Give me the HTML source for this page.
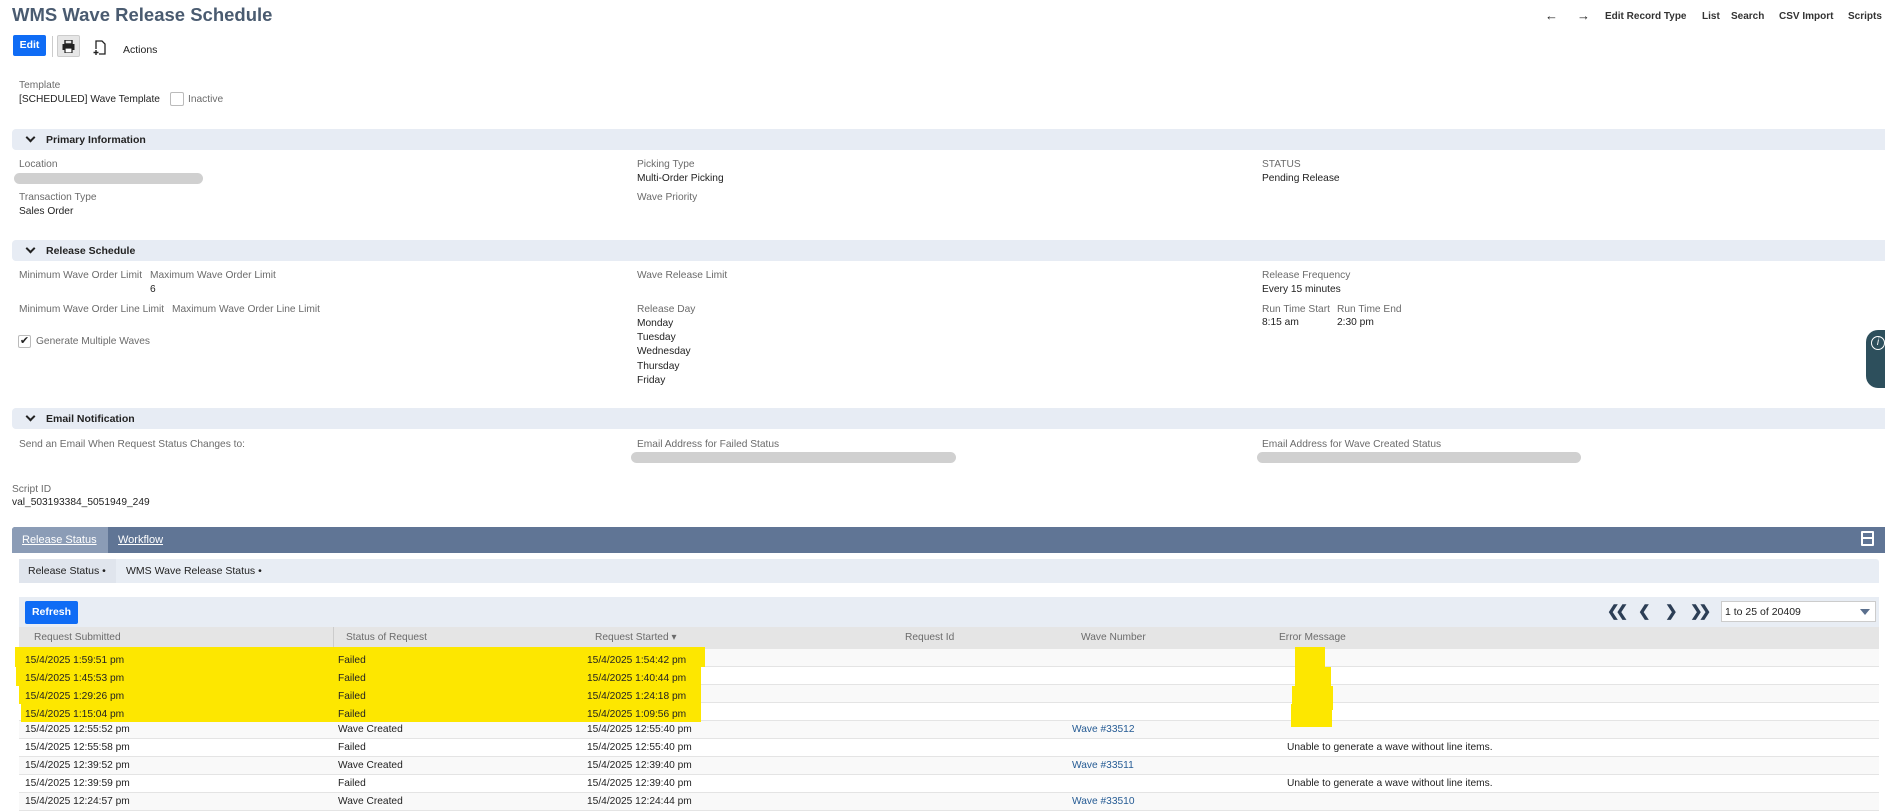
<!DOCTYPE html>
<html><head><meta charset="utf-8"><style>
*{margin:0;padding:0;box-sizing:border-box}
body{width:1885px;height:811px;overflow:hidden;background:#fff;font-family:"Liberation Sans",sans-serif;font-size:10.2px;color:#222;position:relative}
.a{position:absolute;white-space:nowrap}
.l{color:#6b6b6b}
.bar{position:absolute;left:12px;right:0;height:21px;background:#e7ecf4;border-radius:4px 0 0 4px;font-weight:bold;font-size:10.5px;color:#222;padding:5px 0 0 34px}
.bar:before{content:"";position:absolute;left:15px;top:5px;width:5px;height:5px;border-right:2px solid #222;border-bottom:2px solid #222;transform:rotate(45deg)}
.pill{position:absolute;height:11px;background:#d0d0d0;border-radius:6px}
.row{position:absolute;left:19px;width:1860px;height:18px;border-bottom:1px solid #e4e4e4}
.row span{position:absolute;top:3px}
.y{position:absolute;background:#fde700}
a{color:#255b94;text-decoration:none}
.nv{position:absolute;top:11px;font-size:10px;font-weight:bold;color:#333;white-space:nowrap}
</style></head><body>
<div class="a" style="left:12px;top:4px;font-size:18.5px;font-weight:bold;color:#4a5b70">WMS Wave Release Schedule</div>
<div class="a" style="left:1545px;top:8px;font-size:13px;font-weight:bold">&larr;</div>
<div class="a" style="left:1577px;top:8px;font-size:13px;font-weight:bold">&rarr;</div>
<div class="nv" style="left:1605px">Edit Record Type</div>
<div class="nv" style="left:1702px">List</div>
<div class="nv" style="left:1731px">Search</div>
<div class="nv" style="left:1779px">CSV Import</div>
<div class="nv" style="left:1848px">Scripts</div>
<div class="a" style="left:13px;top:35px;width:33px;height:21px;background:#0f6cf5;border-radius:2px;color:#fff;font-weight:bold;font-size:10.5px;text-align:center;line-height:21px">Edit</div>
<div class="a" style="left:52px;top:36px;width:1px;height:21px;background:#ccc"></div>
<div class="a" style="left:57px;top:35px;width:23px;height:22px;background:#e6e6e6;border:1px solid #ccc;border-radius:2px"></div>
<svg class="a" style="left:62px;top:40px" width="13" height="13" viewBox="0 0 13 13"><rect x="3" y="0" width="7" height="4" fill="none" stroke="#222" stroke-width="1.4"/><rect x="0.5" y="4" width="12" height="6" fill="#222"/><rect x="3" y="8" width="7" height="5" fill="#fff" stroke="#222" stroke-width="1.2"/></svg>
<svg class="a" style="left:93px;top:40px" width="14" height="15" viewBox="0 0 14 15"><path d="M3 9V1h6l3 3v10H6" fill="none" stroke="#222" stroke-width="1.3"/><path d="M3 10v5M0.5 12.5h5" stroke="#222" stroke-width="1.4"/></svg>
<div class="a" style="left:123px;top:44px;font-size:10.5px">Actions</div>

<div class="a l" style="left:19px;top:80px">Template</div>
<div class="a" style="left:19px;top:94px">[SCHEDULED] Wave Template</div>
<div class="a" style="left:170px;top:92px;width:14px;height:14px;border:1px solid #bbb;border-radius:2px"></div>
<div class="a l" style="left:188px;top:94px">Inactive</div>

<div class="bar" style="top:129px">Primary Information</div>
<div class="a l" style="left:19px;top:159px">Location</div>
<div class="pill" style="left:14px;top:173px;width:189px"></div>
<div class="a l" style="left:19px;top:192px">Transaction Type</div>
<div class="a" style="left:19px;top:206px">Sales Order</div>
<div class="a l" style="left:637px;top:159px">Picking Type</div>
<div class="a" style="left:637px;top:173px">Multi-Order Picking</div>
<div class="a l" style="left:637px;top:192px">Wave Priority</div>
<div class="a l" style="left:1262px;top:159px">STATUS</div>
<div class="a" style="left:1262px;top:173px">Pending Release</div>

<div class="bar" style="top:240px">Release Schedule</div>
<div class="a l" style="left:19px;top:270px">Minimum Wave Order Limit</div>
<div class="a l" style="left:150px;top:270px">Maximum Wave Order Limit</div>
<div class="a" style="left:150px;top:284px">6</div>
<div class="a l" style="left:19px;top:304px">Minimum Wave Order Line Limit</div>
<div class="a l" style="left:172px;top:304px">Maximum Wave Order Line Limit</div>
<div class="a" style="left:18px;top:335px;width:13px;height:13px;border:1px solid #bbb;border-radius:2px;font-size:11px;line-height:11px;text-align:center">&#10004;</div>
<div class="a l" style="left:36px;top:336px">Generate Multiple Waves</div>
<div class="a l" style="left:637px;top:270px">Wave Release Limit</div>
<div class="a l" style="left:637px;top:304px">Release Day</div>
<div class="a" style="left:637px;top:317px;line-height:14.2px">Monday<br>Tuesday<br>Wednesday<br>Thursday<br>Friday</div>
<div class="a l" style="left:1262px;top:270px">Release Frequency</div>
<div class="a" style="left:1262px;top:284px">Every 15 minutes</div>
<div class="a l" style="left:1262px;top:304px">Run Time Start</div>
<div class="a l" style="left:1337px;top:304px">Run Time End</div>
<div class="a" style="left:1262px;top:317px">8:15 am</div>
<div class="a" style="left:1337px;top:317px">2:30 pm</div>
<div class="a" style="left:1866px;top:330px;width:30px;height:58px;background:#2d4f5c;border-radius:12px 0 0 12px"></div>
<div class="a" style="left:1871px;top:336px;width:14px;height:14px;border:1px solid #fff;border-radius:50%;color:#fff;font-size:10px;font-style:italic;text-align:center;line-height:12px">i</div>

<div class="bar" style="top:408px">Email Notification</div>
<div class="a l" style="left:19px;top:439px">Send an Email When Request Status Changes to:</div>
<div class="a l" style="left:637px;top:439px">Email Address for Failed Status</div>
<div class="pill" style="left:631px;top:452px;width:325px"></div>
<div class="a l" style="left:1262px;top:439px">Email Address for Wave Created Status</div>
<div class="pill" style="left:1257px;top:452px;width:324px"></div>

<div class="a l" style="left:12px;top:484px">Script ID</div>
<div class="a" style="left:12px;top:497px">val_503193384_5051949_249</div>

<div class="a" style="left:12px;top:527px;width:1873px;height:26px;background:#607595;border-radius:3px 0 0 0"></div>
<div class="a" style="left:12px;top:527px;width:96px;height:26px;background:#8b9cb6;border-radius:3px 0 0 0"></div>
<div class="a" style="left:22px;top:534px;color:#fff;font-size:11px;text-decoration:underline">Release Status</div>
<div class="a" style="left:118px;top:534px;color:#fff;font-size:11px;text-decoration:underline">Workflow</div>
<div class="a" style="left:1861px;top:531px;width:13px;height:15px;border:2px solid #fff;border-radius:1px"></div>
<div class="a" style="left:1861px;top:537px;width:13px;height:2px;background:#fff"></div>

<div class="a" style="left:19px;top:559px;width:1860px;height:24px;background:#e8edf4;border-radius:3px 3px 0 0"></div>
<div class="a" style="left:19px;top:559px;width:97px;height:24px;background:#e0e5ed"></div>
<div class="a" style="left:28px;top:565px;font-size:10.5px">Release Status &#8226;</div>
<div class="a" style="left:126px;top:565px;font-size:10.5px">WMS Wave Release Status &#8226;</div>
<div class="a" style="left:19px;top:597px;width:1860px;height:30px;background:#e8edf4"></div>
<div class="a" style="left:25px;top:601px;width:53px;height:23px;background:#0f6cf5;border-radius:2px;color:#fff;font-weight:bold;font-size:10.5px;text-align:center;line-height:23px">Refresh</div>
<div class="a" style="left:1607px;top:602px;font-size:15px;font-weight:bold;color:#2c3e55;letter-spacing:-4px">&#10094;&#10094;</div>
<div class="a" style="left:1638px;top:602px;font-size:15px;font-weight:bold;color:#2c3e55">&#10094;</div>
<div class="a" style="left:1665px;top:602px;font-size:15px;font-weight:bold;color:#2c3e55">&#10095;</div>
<div class="a" style="left:1690px;top:602px;font-size:15px;font-weight:bold;color:#2c3e55;letter-spacing:-4px">&#10095;&#10095;</div>
<div class="a" style="left:1721px;top:601px;width:155px;height:21px;background:#fff;border:1px solid #ccc;padding:4px 3px;font-size:10.5px">1 to 25 of 20409</div>
<div class="a" style="left:1860px;top:609px;border-left:5px solid transparent;border-right:5px solid transparent;border-top:6px solid #5a6f8d"></div>
<div class="a" style="left:19px;top:627px;width:1860px;height:22px;background:#e5e5e5"></div>
<div class="a" style="left:333px;top:627px;width:1px;height:22px;background:#ccc"></div>
<div class="a l" style="left:34px;top:632px">Request Submitted</div>
<div class="a l" style="left:346px;top:632px">Status of Request</div>
<div class="a l" style="left:595px;top:632px">Request Started &#9662;</div>
<div class="a l" style="left:905px;top:632px">Request Id</div>
<div class="a l" style="left:1081px;top:632px">Wave Number</div>
<div class="a l" style="left:1279px;top:632px">Error Message</div>

<div class="row" style="top:649px;background:#f9f9f9"></div>
<div class="row" style="top:667px"></div>
<div class="row" style="top:685px;background:#f9f9f9"></div>
<div class="row" style="top:703px"></div>
<div class="row" style="top:721px;background:#f9f9f9"><span style="left:6px">15/4/2025 12:55:52 pm</span><span style="left:319px">Wave Created</span><span style="left:568px">15/4/2025 12:55:40 pm</span><span style="left:1053px"><a>Wave #33512</a></span></div>
<div class="row" style="top:739px"><span style="left:6px">15/4/2025 12:55:58 pm</span><span style="left:319px">Failed</span><span style="left:568px">15/4/2025 12:55:40 pm</span><span style="left:1268px">Unable to generate a wave without line items.</span></div>
<div class="row" style="top:757px;background:#f9f9f9"><span style="left:6px">15/4/2025 12:39:52 pm</span><span style="left:319px">Wave Created</span><span style="left:568px">15/4/2025 12:39:40 pm</span><span style="left:1053px"><a>Wave #33511</a></span></div>
<div class="row" style="top:775px"><span style="left:6px">15/4/2025 12:39:59 pm</span><span style="left:319px">Failed</span><span style="left:568px">15/4/2025 12:39:40 pm</span><span style="left:1268px">Unable to generate a wave without line items.</span></div>
<div class="row" style="top:793px;background:#f9f9f9"><span style="left:6px">15/4/2025 12:24:57 pm</span><span style="left:319px">Wave Created</span><span style="left:568px">15/4/2025 12:24:44 pm</span><span style="left:1053px"><a>Wave #33510</a></span></div>

<div class="y" style="left:15px;top:647px;width:690px;height:20px"></div>
<div class="y" style="left:16px;top:667px;width:685px;height:19px"></div>
<div class="y" style="left:19px;top:686px;width:682px;height:18px"></div>
<div class="y" style="left:21px;top:704px;width:680px;height:18px"></div>
<div class="y" style="left:1295px;top:647px;width:30px;height:24px"></div>
<div class="y" style="left:1295px;top:667px;width:36px;height:22px"></div>
<div class="y" style="left:1292px;top:686px;width:41px;height:24px"></div>
<div class="y" style="left:1291px;top:704px;width:41px;height:23px"></div>
<div class="a" style="left:25px;top:652px;line-height:18px">15/4/2025 1:59:51 pm<br>15/4/2025 1:45:53 pm<br>15/4/2025 1:29:26 pm<br>15/4/2025 1:15:04 pm</div>
<div class="a" style="left:338px;top:652px;line-height:18px">Failed<br>Failed<br>Failed<br>Failed</div>
<div class="a" style="left:587px;top:652px;line-height:18px">15/4/2025 1:54:42 pm<br>15/4/2025 1:40:44 pm<br>15/4/2025 1:24:18 pm<br>15/4/2025 1:09:56 pm</div>
</body></html>
